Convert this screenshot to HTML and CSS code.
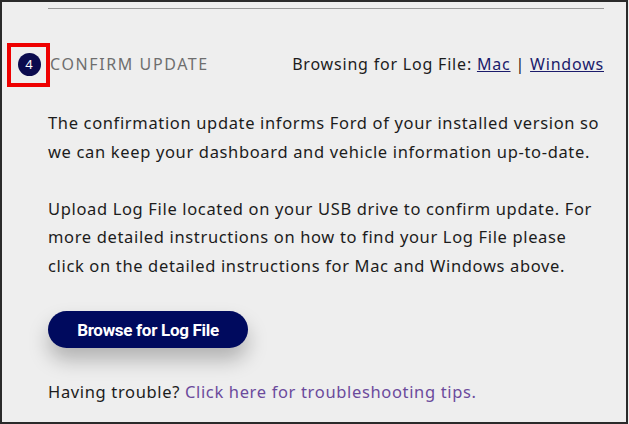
FILE: index.html
```html
<!DOCTYPE html>
<html lang="en">
<head>
  <meta charset="UTF-8" />
  <title>Confirm Update</title>
  <link rel="stylesheet" href="styles.css">
</head>
<body>
  <div class="frame">
    <div class="step">
      <hr class="divider">

      <div class="step-header">
        <div class="highlight">
          <span class="step-num">4</span>
        </div>
        <h3 class="step-title">CONFIRM UPDATE</h3>
        <div class="browse-links">
          Browsing for Log File: <a href="#">Mac</a> | <a href="#">Windows</a>
        </div>
      </div>

      <p>The confirmation update informs Ford of your installed version so we can keep your dashboard and vehicle information up-to-date.</p>

      <p>Upload Log File located on your USB drive to confirm update. For more detailed instructions on how to find your Log File please click on the detailed instructions for Mac and Windows above.</p>

      <button class="browse-btn">Browse for Log File</button>

      <p class="trouble">Having trouble? <a href="#">Click here for troubleshooting tips.</a></p>
    </div>
  </div>
</body>
</html>
```

FILE: styles.css
```css
html, body {
  margin: 0;
  height: 100%;
}

body {
  background: #eeeeee;
  font-family: 'Noto Sans', sans-serif;
  color: #1c1c1c;
}

.frame {
  box-sizing: border-box;
  height: 424px;
  width: 628px;
  border: 2px solid #2a2a2a;
  padding: 6px 22px 0 46px;
}

.divider {
  margin: 0;
  border: none;
  border-top: 1px solid #9a9a9a;
}

.step-header {
  display: flex;
  align-items: center;
  margin: 34px 0 0 -41px;
}

.highlight {
  box-sizing: border-box;
  width: 43px;
  height: 44px;
  border: 4px solid #ee0000;
  display: flex;
  align-items: center;
  justify-content: center;
}

.step-num {
  width: 23px;
  height: 23px;
  border-radius: 50%;
  background: #0b0b4e;
  color: #ffffff;
  font-size: 13px;
  line-height: 23px;
  text-align: center;
  margin: -2px 0 0 1px;
}

.step-title {
  margin: -2px 0 0;
  font-weight: normal;
  font-size: 16px;
  letter-spacing: 1.6px;
  color: #6e6e6e;
}

.browse-links {
  margin: -2px 0 0 auto;
  font-size: 16px;
  letter-spacing: 0.8px;
  color: #1c1c1c;
}

.browse-links a {
  color: #1b1b6b;
}

p {
  font-size: 16.5px;
  line-height: 28.5px;
  letter-spacing: 0.65px;
  margin: 0 0 28.5px;
}

.step-header + p {
  margin-top: 22px;
}

.browse-btn {
  display: block;
  width: 200px;
  height: 37px;
  border: none;
  border-radius: 19px;
  background: #000a5e;
  color: #ffffff;
  font-family: 'Roboto', sans-serif;
  font-weight: bold;
  font-size: 17px;
  letter-spacing: -0.3px;
  box-shadow: 0 12px 20px rgba(0, 0, 0, 0.25);
  cursor: pointer;
  margin-top: 31px;
}

.trouble {
  margin-top: 30px;
}

.trouble a {
  color: #6b4a9c;
  text-decoration: none;
}
```
